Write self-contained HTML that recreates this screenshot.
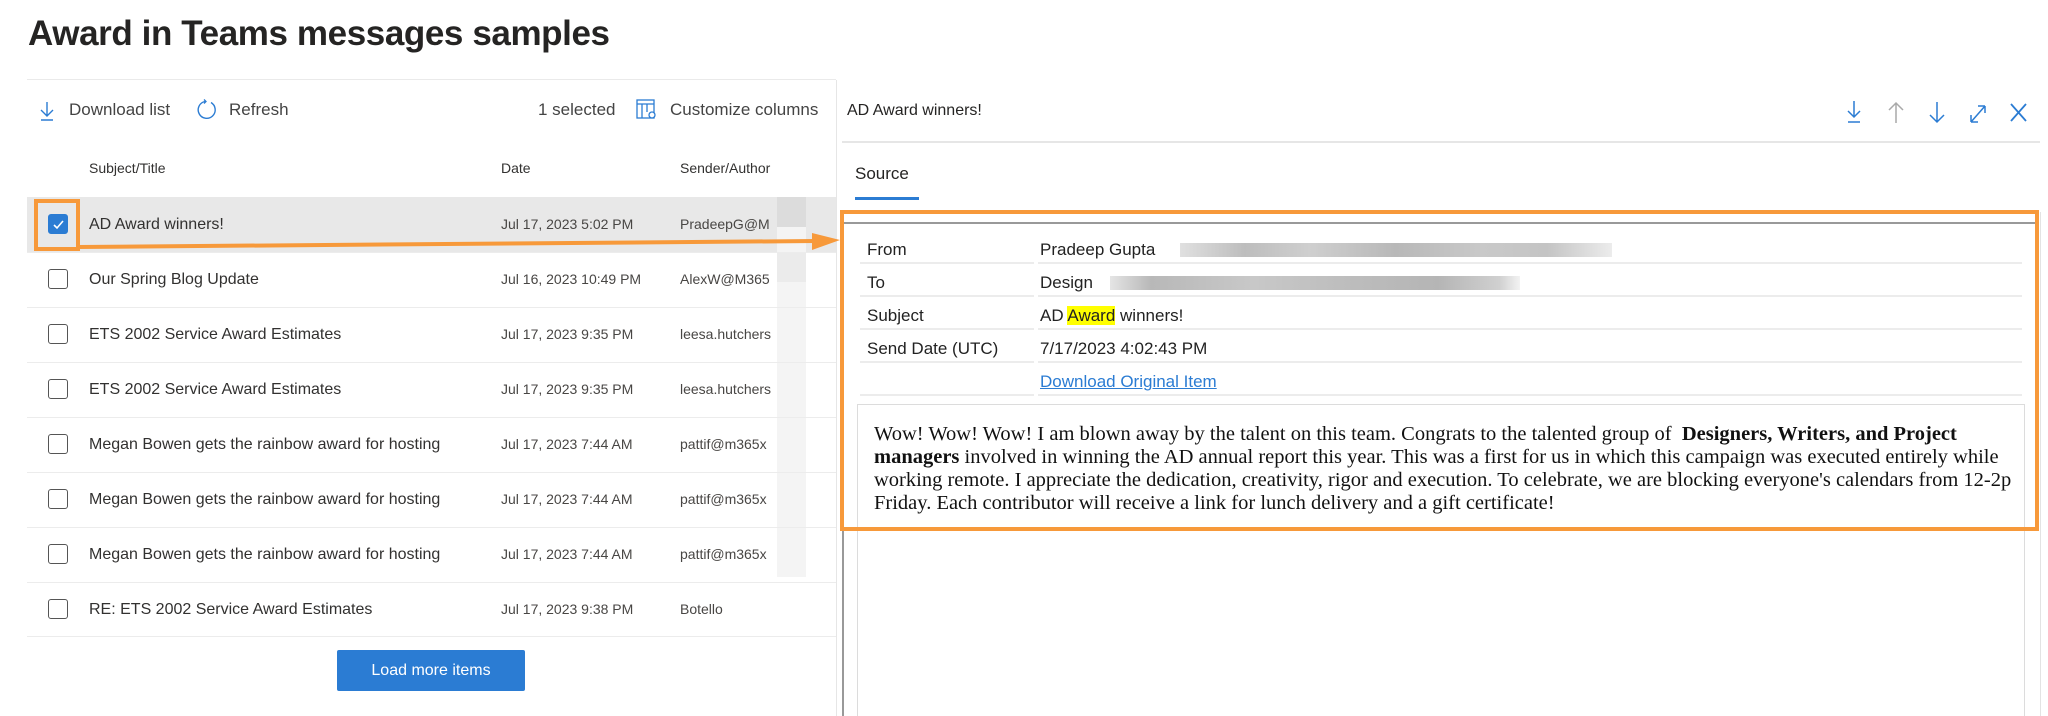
<!DOCTYPE html>
<html><head><meta charset="utf-8"><style>
*{margin:0;padding:0;box-sizing:border-box}
body{width:2048px;height:716px;background:#fff;position:relative;overflow:hidden;font-family:"Liberation Sans",sans-serif;color:#323130}
.a{position:absolute;white-space:nowrap}
.t{font-size:16px;color:#323130}
.d{font-size:14px;color:#484644}
.s{font-size:14px;color:#484644}
.cb{position:absolute;left:48px;width:20px;height:20px;border:1.5px solid #555;border-radius:3px;background:#fff}
.sep{position:absolute;left:27px;width:809px;height:1px;background:#ececec}
.lbl{font-size:17px;color:#222}
.rs{position:absolute;height:2px;background:#ececec}
.blur{position:absolute;height:14px}
</style></head><body>
<div class="a" style="left:28px;top:14px;font-size:35px;font-weight:bold;color:#252423;letter-spacing:-0.4px">Award in Teams messages samples</div>
<div class="a" style="left:27px;top:79px;width:809px;height:1px;background:#eaeaea"></div>
<!-- toolbar -->
<svg class="a" style="left:38px;top:100px" width="18" height="22" viewBox="0 0 18 22"><path d="M9 2v14M3 10l6 6 6-6M3 20h12" stroke="#2b7cd3" stroke-width="1.4" fill="none"/></svg>
<div class="a" style="left:69px;top:100px;font-size:17px;color:#444">Download list</div>
<svg class="a" style="left:196px;top:99px" width="22" height="22" viewBox="0 0 22 22"><path d="M9 2.5A8.5 8.5 0 1 0 15 3.5" stroke="#2b7cd3" stroke-width="1.4" fill="none"/><path d="M8 0.5l2 2-2 2" stroke="#2b7cd3" stroke-width="1.3" fill="none"/></svg>
<div class="a" style="left:229px;top:100px;font-size:17px;color:#444">Refresh</div>
<div class="a" style="left:538px;top:100px;font-size:17px;color:#444">1 selected</div>
<svg class="a" style="left:636px;top:99px" width="22" height="22" viewBox="0 0 22 22"><rect x="1" y="1" width="17" height="18" stroke="#2b7cd3" fill="none" stroke-width="1.3"/><path d="M1 5h17M6 5v14M11 5v8" stroke="#2b7cd3" stroke-width="1.3"/><circle cx="16" cy="16" r="3" stroke="#2b7cd3" fill="#fff" stroke-width="1.3"/></svg>
<div class="a" style="left:670px;top:100px;font-size:17px;color:#444">Customize columns</div>
<!-- header -->
<div class="a" style="left:89px;top:160px;font-size:14px;color:#323130">Subject/Title</div>
<div class="a" style="left:501px;top:160px;font-size:14px;color:#323130">Date</div>
<div class="a" style="left:680px;top:160px;font-size:14px;color:#323130">Sender/Author</div>
<!-- selected bg -->
<div class="a" style="left:27px;top:197px;width:809px;height:55px;background:#e8e8e8"></div>
<!-- blurred column -->
<div class="a" style="left:777px;top:197px;width:29px;height:380px;background:#f4f4f4"></div>
<div class="a" style="left:777px;top:197px;width:29px;height:30px;background:#dcdcdc"></div>
<div class="a" style="left:777px;top:252px;width:29px;height:30px;background:#ebebeb"></div>
<div class="sep" style="top:307px"></div><div class="sep" style="top:362px"></div><div class="sep" style="top:417px"></div><div class="sep" style="top:472px"></div><div class="sep" style="top:527px"></div><div class="sep" style="top:582px"></div><div class="sep" style="top:636px"></div><div class="sep" style="top:252px"></div>
<!-- rows -->
<div class="cb" style="top:214px;background:#2b7cd3;border-color:#2b7cd3"></div>
<svg class="a" style="left:52px;top:218px" width="13" height="13" viewBox="0 0 13 13"><path d="M2 7l3 3 6-7" stroke="#fff" stroke-width="1.6" fill="none"/></svg>
<div class="a t" style="left:89px;top:216px">AD Award winners!</div><div class="a d" style="left:501px;top:216px">Jul 17, 2023 5:02 PM</div><div class="a s" style="left:680px;top:216px;width:97px;overflow:hidden">PradeepG@M</div>
<div class="cb" style="top:269px"></div><div class="a t" style="left:89px;top:271px">Our Spring Blog Update</div><div class="a d" style="left:501px;top:271px">Jul 16, 2023 10:49 PM</div><div class="a s" style="left:680px;top:271px;width:97px;overflow:hidden">AlexW@M365</div>
<div class="cb" style="top:324px"></div><div class="a t" style="left:89px;top:326px">ETS 2002 Service Award Estimates</div><div class="a d" style="left:501px;top:326px">Jul 17, 2023 9:35 PM</div><div class="a s" style="left:680px;top:326px;width:97px;overflow:hidden">leesa.hutchers</div>
<div class="cb" style="top:379px"></div><div class="a t" style="left:89px;top:381px">ETS 2002 Service Award Estimates</div><div class="a d" style="left:501px;top:381px">Jul 17, 2023 9:35 PM</div><div class="a s" style="left:680px;top:381px;width:97px;overflow:hidden">leesa.hutchers</div>
<div class="cb" style="top:434px"></div><div class="a t" style="left:89px;top:436px;width:405px;overflow:hidden;text-overflow:ellipsis">Megan Bowen gets the rainbow award for hosting</div><div class="a d" style="left:501px;top:436px">Jul 17, 2023 7:44 AM</div><div class="a s" style="left:680px;top:436px;width:97px;overflow:hidden">pattif@m365x</div>
<div class="cb" style="top:489px"></div><div class="a t" style="left:89px;top:491px;width:405px;overflow:hidden;text-overflow:ellipsis">Megan Bowen gets the rainbow award for hosting</div><div class="a d" style="left:501px;top:491px">Jul 17, 2023 7:44 AM</div><div class="a s" style="left:680px;top:491px;width:97px;overflow:hidden">pattif@m365x</div>
<div class="cb" style="top:544px"></div><div class="a t" style="left:89px;top:546px;width:405px;overflow:hidden;text-overflow:ellipsis">Megan Bowen gets the rainbow award for hosting</div><div class="a d" style="left:501px;top:546px">Jul 17, 2023 7:44 AM</div><div class="a s" style="left:680px;top:546px;width:97px;overflow:hidden">pattif@m365x</div>
<div class="cb" style="top:599px"></div><div class="a t" style="left:89px;top:601px">RE: ETS 2002 Service Award Estimates</div><div class="a d" style="left:501px;top:601px">Jul 17, 2023 9:38 PM</div><div class="a s" style="left:680px;top:601px">Botello</div>
<div class="a" style="left:337px;top:650px;width:188px;height:41px;background:#2b7cd3;border-radius:2px;color:#fff;font-size:16px;text-align:center;line-height:41px">Load more items</div>
<!-- right panel -->
<div class="a" style="left:836px;top:80px;width:1px;height:636px;background:#e6e6e6"></div>
<div class="a" style="left:847px;top:102px;font-size:16px;color:#252423">AD Award winners!</div>
<svg class="a" style="left:1844px;top:98px" width="190" height="28" viewBox="0 0 190 28"><g fill="none" stroke-width="1.5"><path d="M10 3v16M4 13l6 6 6-6M4 24h12" stroke="#2b7cd3"/><path d="M52 5v20M45 12l7-7 7 7" stroke="#a9a9a9"/><path d="M93 4v20M86 17l7 7 7-7" stroke="#2b7cd3"/><path d="M127 24l14-16M127 24v-7M127 24h7M141 8h-7M141 8v7" stroke="#2b7cd3"/><path d="M167 6l15 17M182 6l-15 17" stroke="#2b7cd3" stroke-width="1.8"/></g></svg>
<div class="a" style="left:842px;top:141px;width:1198px;height:2px;background:#e6e6e6"></div>
<div class="a" style="left:855px;top:164px;font-size:17px;color:#252423">Source</div>
<div class="a" style="left:855px;top:197px;width:64px;height:3px;background:#2b7cd3"></div>
<!-- source box lines -->
<div class="a" style="left:842px;top:222px;width:2px;height:494px;background:#999"></div>
<div class="a" style="left:843px;top:222px;width:1192px;height:2px;background:#999"></div>
<div class="a" style="left:2040px;top:212px;width:1px;height:504px;background:#e3e3e3"></div>
<div class="a lbl" style="left:867px;top:240px">From</div><div class="a lbl" style="left:1040px;top:240px">Pradeep Gupta</div>
<div class="a lbl" style="left:867px;top:273px">To</div><div class="a lbl" style="left:1040px;top:273px">Design</div>
<div class="a lbl" style="left:867px;top:306px">Subject</div><div class="a lbl" style="left:1040px;top:306px">AD <span style="background:#ffff00">Award</span> winners!</div>
<div class="a lbl" style="left:867px;top:339px">Send Date (UTC)</div><div class="a lbl" style="left:1040px;top:339px">7/17/2023 4:02:43 PM</div>
<div class="a lbl" style="left:1040px;top:372px;color:#2b7cd3;text-decoration:underline">Download Original Item</div>
<div class="blur" style="left:1180px;top:243px;width:432px;background:linear-gradient(90deg,#e0e0e0,#bdbdbd 15%,#cfcfcf 30%,#b8b8b8 50%,#c9c9c9 70%,#c4c4c4 85%,#ececec)"></div>
<div class="blur" style="left:1110px;top:276px;width:410px;background:linear-gradient(90deg,#e5e5e5,#b8b8b8 10%,#c8c8c8 35%,#bcbcbc 60%,#b5b5b5 80%,#d0d0d0 95%,#f3f3f3)"></div>
<div class="rs" style="left:860px;top:262px;width:174px"></div><div class="rs" style="left:1038px;top:262px;width:984px"></div>
<div class="rs" style="left:860px;top:295px;width:174px"></div><div class="rs" style="left:1038px;top:295px;width:984px"></div>
<div class="rs" style="left:860px;top:328px;width:174px"></div><div class="rs" style="left:1038px;top:328px;width:984px"></div>
<div class="rs" style="left:860px;top:361px;width:174px"></div><div class="rs" style="left:1038px;top:361px;width:984px"></div>
<div class="rs" style="left:860px;top:394px;width:174px"></div><div class="rs" style="left:1038px;top:394px;width:984px"></div>
<div class="a" style="left:857px;top:404px;width:1168px;height:312px;border:1px solid #dcdcdc;border-bottom:none"></div>
<div class="a" style="left:874px;top:423px;width:1140px;white-space:normal;font-family:'Liberation Serif',serif;font-size:20.5px;line-height:23px;color:#111">Wow! Wow! Wow! I am blown away by the talent on this team. Congrats to the talented group of&nbsp; <b>Designers, Writers, and Project managers</b> involved in winning the AD annual report this year. This was a first for us in which this campaign was executed entirely while working remote. I appreciate the dedication, creativity, rigor and execution. To celebrate, we are blocking everyone's calendars from 12-2p Friday. Each contributor will receive a link for lunch delivery and a gift certificate!</div>
<!-- orange annotations -->
<div class="a" style="left:840px;top:210px;width:1199px;height:321px;border:4px solid #f7993a"></div>
<div class="a" style="left:34px;top:199px;width:46px;height:52px;border:4px solid #f7993a"></div>
<svg class="a" style="left:78px;top:230px" width="770" height="26" viewBox="0 0 770 26"><path d="M0 17L738 11" stroke="#f7993a" stroke-width="4"/><path d="M734 3L762 10 734 20Z" fill="#f7993a"/></svg>
</body></html>
